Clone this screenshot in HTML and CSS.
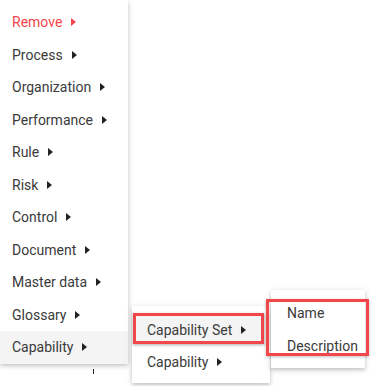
FILE: index.html
```html
<!DOCTYPE html>
<html>
<head>
<meta charset="utf-8">
<link rel="stylesheet" href="styles.css">
</head>
<body>
<div class="stage">
  <div class="tick tick-top"></div>
  <div class="tick tick-bottom"></div>
  <ul class="menu main-menu">
    <li class="item danger">Remove <span class="caret"></span></li>
    <li class="item">Process <span class="caret"></span></li>
    <li class="item">Organization <span class="caret"></span></li>
    <li class="item">Performance <span class="caret"></span></li>
    <li class="item">Rule <span class="caret"></span></li>
    <li class="item">Risk <span class="caret"></span></li>
    <li class="item">Control <span class="caret"></span></li>
    <li class="item">Document <span class="caret"></span></li>
    <li class="item">Master data <span class="caret"></span></li>
    <li class="item">Glossary <span class="caret"></span></li>
    <li class="item active">Capability <span class="caret"></span></li>
  </ul>
  <ul class="menu sub-menu">
    <li class="item sub-item active">Capability Set <span class="caret"></span></li>
    <li class="item sub-item">Capability <span class="caret"></span></li>
  </ul>
  <ul class="menu leaf-menu">
    <li class="item leaf-item">Name</li>
    <li class="item leaf-item">Description</li>
  </ul>
  <div class="mark mark-set"></div>
  <div class="mark mark-leaf"></div>
</div>
</body>
</html>
```
FILE: styles.css
```css
html, body {
  margin: 0;
  padding: 0;
  background: #ffffff;
}
.stage {
  position: relative;
  width: 373px;
  height: 386px;
  overflow: hidden;
  font-family: Roboto, "Liberation Sans", Arial, sans-serif;
  font-size: 14px;
  color: #3a3a3a;
}
.menu {
  list-style: none;
  margin: 0;
  background: #ffffff;
}
.main-menu {
  width: 128px;
  padding: 6px 0 0 0;
  box-shadow: 0 2px 4px rgba(0,0,0,0.18), 0 1px 8px rgba(0,0,0,0.08);
  position: relative;
  z-index: 1;
}
.item {
  display: flex;
  align-items: center;
  gap: 9px;
  height: 32.5px;
  padding-left: 12px;
  white-space: nowrap;
}
.item.danger {
  color: #f2464b;
}
.item.active {
  background: #f4f4f4;
}
.caret {
  width: 0;
  height: 0;
  border-top: 4px solid transparent;
  border-bottom: 4px solid transparent;
  border-left: 5px solid #222222;
}
.danger .caret {
  border-left-color: #f2464b;
}
.sub-menu {
  position: absolute;
  left: 132px;
  top: 306px;
  width: 138px;
  padding: 8px 0 5px 0;
  box-shadow: 0 2px 4px rgba(0,0,0,0.2), 0 1px 8px rgba(0,0,0,0.08);
  z-index: 2;
}
.sub-item {
  height: 32px;
  padding-left: 15px;
}
.leaf-menu {
  position: absolute;
  left: 271px;
  top: 290px;
  width: 94px;
  padding: 7px 0 6px 0;
  box-shadow: 0 2px 4px rgba(0,0,0,0.2), 0 1px 8px rgba(0,0,0,0.08);
  z-index: 3;
}
.leaf-item {
  height: 32.5px;
  padding-left: 16px;
}
.mark {
  position: absolute;
  border: 3px solid #f2464b;
  box-sizing: border-box;
  z-index: 5;
  box-shadow: 0 1px 3px rgba(0,0,0,0.25);
}
.mark-set {
  left: 133px;
  top: 313px;
  width: 131px;
  height: 31px;
}
.mark-leaf {
  left: 266px;
  top: 299px;
  width: 103px;
  height: 57px;
}
.tick {
  position: absolute;
  left: 93px;
  width: 1px;
  background: #222222;
}
.tick-top {
  top: 0;
  height: 3px;
}
.tick-bottom {
  top: 369px;
  height: 5px;
}
```
